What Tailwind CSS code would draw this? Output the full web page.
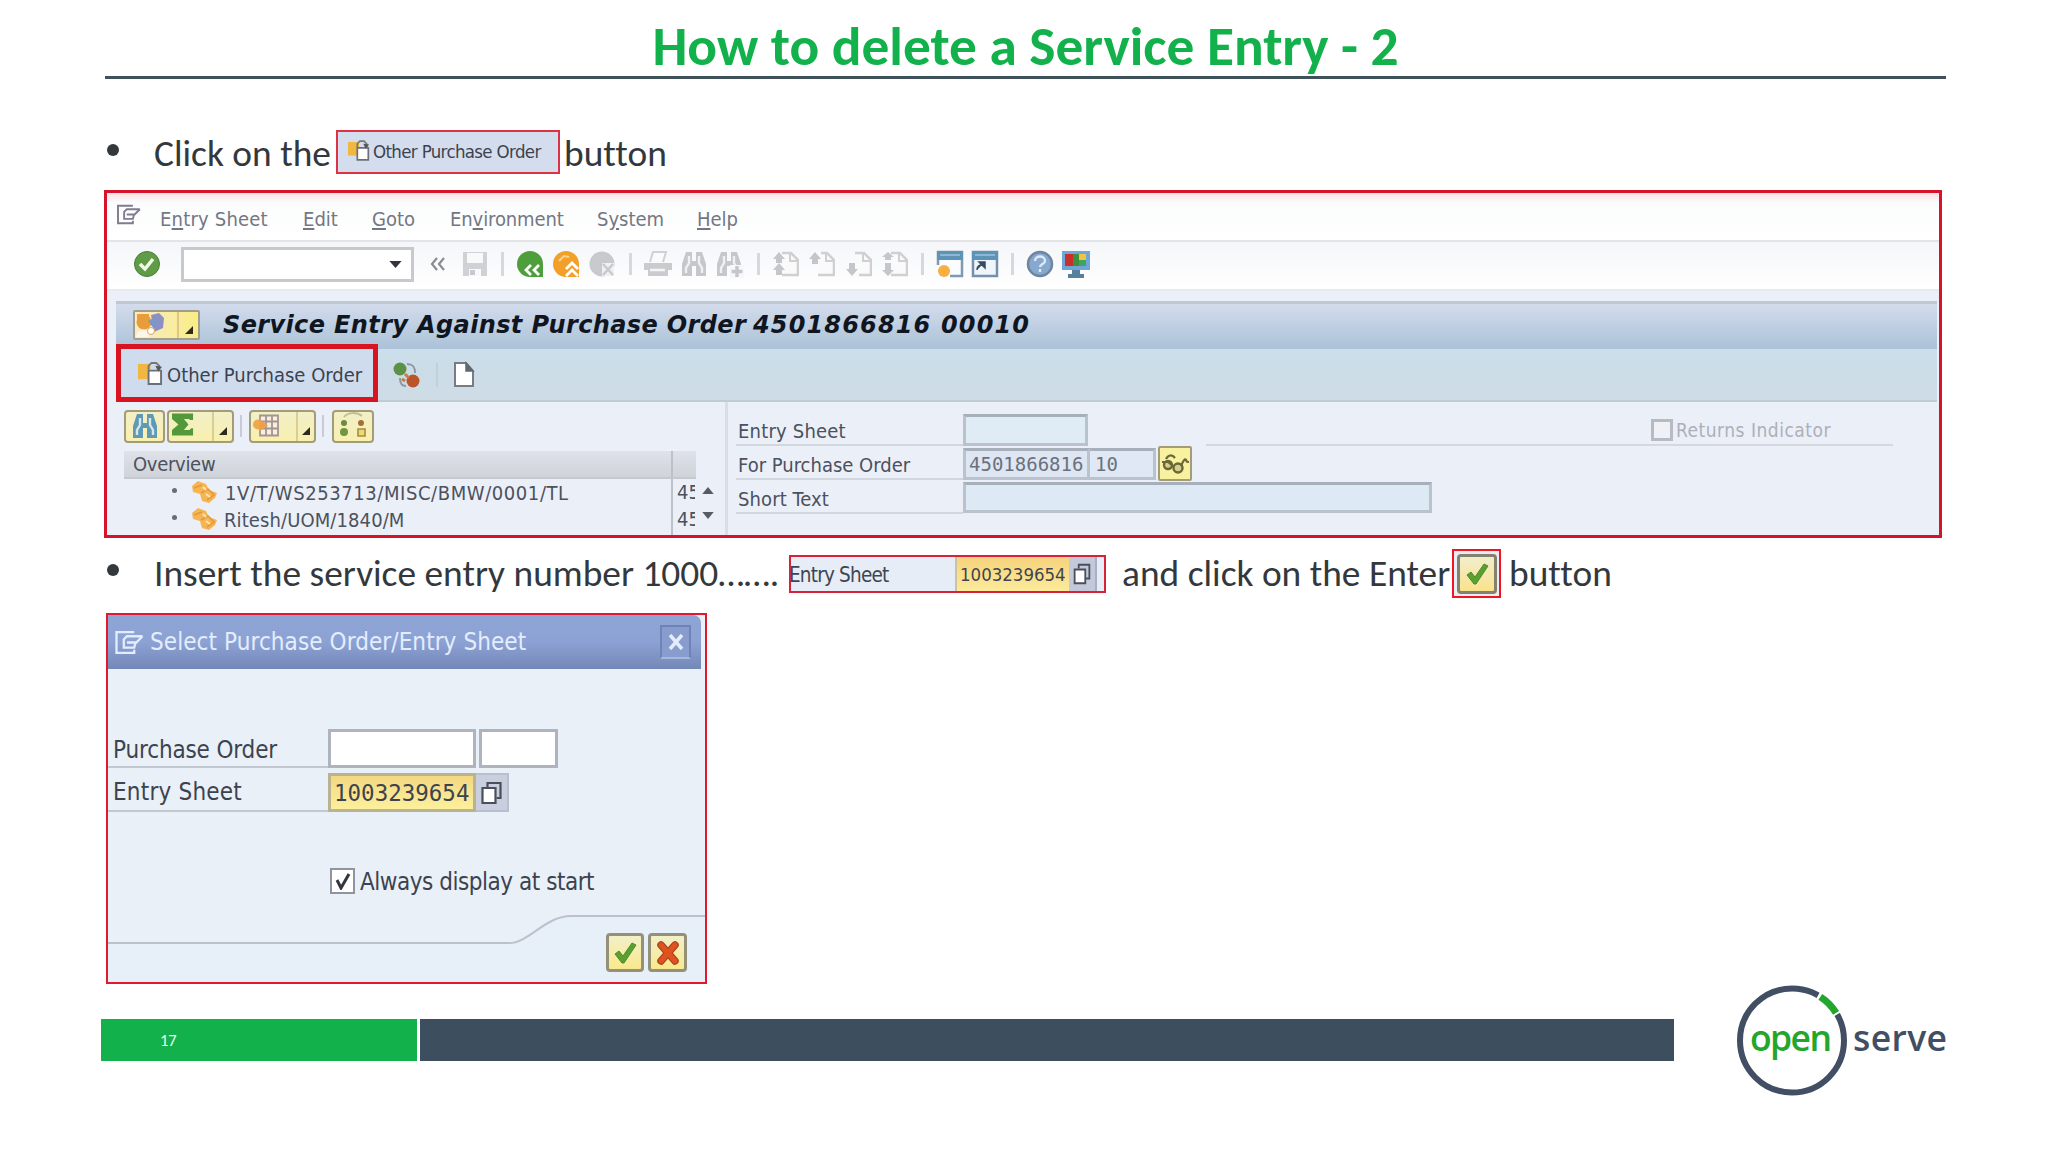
<!DOCTYPE html>
<html lang="en">
<head>
  <meta charset="utf-8">
  <meta name="viewport" content="width=device-width, initial-scale=1.0">
  <title>How to delete a Service Entry - 2</title>
  <script src="https://cdn.jsdelivr.net/npm/@tailwindcss/browser@4"></script>
</head>
<body class="bg-white w-[2048px] h-[1152px] overflow-hidden font-[Carlito,Lato,sans-serif] text-[#33383d] [font-variant-ligatures:none]">

  <!-- shared icons -->
  <svg class="hidden">
    <symbol id="copy" viewBox="0 0 26 24">
      <path d="M0 2h13v16H0z" fill="#f0b840"/>
      <path d="M11 8V4l3-3h5l3 3v4" fill="none" stroke="#77777a" stroke-width="2"/>
      <path d="M11 9h13v14H11z" fill="#fff" stroke="#6b7078" stroke-width="2"/>
      <path d="M18 4l7 1-4 5z" fill="#555"/>
    </symbol>
    <symbol id="exit" viewBox="0 0 28 24">
      <path d="M19 2H2v20h17v-3" fill="none" stroke="currentColor" stroke-width="2.2"/>
      <path d="M27 6H12L9 9v8h10l1-4M12 12h9l6-6" fill="none" stroke="currentColor" stroke-width="2.2"/>
    </symbol>
    <symbol id="tick" viewBox="0 0 24 24">
      <path d="M2 13l4-3 4 5L19 2l4 2-12 18H9z" fill="#5aa02c" stroke="#4c8a34" stroke-width="1"/>
    </symbol>
    <symbol id="squares" viewBox="0 0 22 24">
      <path d="M7 6V2h13v15h-4" fill="none" stroke="#4a4f58" stroke-width="2.2"/>
      <path d="M2 7h13v15H2z" fill="#fff" stroke="#4a4f58" stroke-width="2.2"/>
    </symbol>
    <symbol id="binoc" viewBox="0 0 26 28">
      <path d="M5 2h6v24H1V14zM21 2h-6v24h10V14zM11 11h4v5h-4z" fill="currentColor"/>
      <path d="M8 6v7l-3 5v5M18 6v7l3 5v5" fill="none" stroke="#fff" stroke-opacity=".75" stroke-width="2.400"/>
    </symbol>
    <symbol id="page" viewBox="0 0 26 28">
      <path d="M9 3h9l7 7v15H9" fill="#fafafa" stroke="#d0d0d3" stroke-width="2.5"/>
      <path d="M17 3v8h8" fill="none" stroke="#d0d0d3" stroke-width="2"/>
    </symbol>
    <symbol id="hand" viewBox="0 0 27 24">
      <path d="M1 6l6-5 8 3 3 6 8 3-2 5-6 5-7-2-2-7-7-2z" fill="#f6b553"/>
      <path d="M3 8l8-3M10 13l7-4 6 6-7 5" fill="none" stroke="#e59a3a" stroke-width="1.6"/>
      <path d="M12 7l3 3M15 14l4 3" stroke="#fde3b4" stroke-width="2"/>
    </symbol>
  </svg>

  <header class="ml-[105px] w-[1841px] h-[79px] pt-[13px] border-b-3 border-[#3f5159] text-center text-[55.4px] leading-[66px] font-bold text-[#12b14c] whitespace-nowrap">How to delete a Service Entry - 2</header>

  <main class="ml-[104px]">
    <!-- first bullet -->
    <div class="mt-[50px] h-[45px] flex items-start text-[37.4px] leading-[48px] whitespace-nowrap">
      <span class="w-[12px] h-[12px] mt-[15px] ml-[3px] rounded-full bg-[#33383d]"></span>
      <span class="ml-[35px] w-[182px]">Click on the</span>
      <span class="w-[224px] h-[44px] mt-px border-2 border-[#dc3244] bg-[#d4dded] flex items-center pl-[10px] text-[#3c434f]">
        <svg class="w-[22px] h-[25px] -mt-1"><use href="#copy"/></svg>
        <span class="ml-[3px] text-[18.5px] leading-[40px] tracking-[-0.65px] font-['DejaVu_Sans_Condensed','DejaVu_Sans',sans-serif]">Other Purchase Order</span>
      </span>
      <span class="ml-[4px]">button</span>
    </div>

    <!-- service entry window -->
    <section class="mt-[16px] w-[1838px] h-[348px] border-3 border-[#d5142b] bg-[#ebeff8] font-['DejaVu_Sans_Condensed','DejaVu_Sans',sans-serif] text-[20px] text-[#4b515d] whitespace-nowrap overflow-hidden">
      <div class="h-[49px] bg-linear-to-b from-[#f8dfe3] via-[#fbfcfd] via-20% to-white border-b-2 border-[#e2e4e6] flex items-start pl-[9px] text-[#737783]">
        <svg class="w-[25px] h-[21px] mt-[11px] text-[#817b91]"><use href="#exit"/></svg>
        <div class="flex leading-[53px] ml-[19px]">
          <span class="w-[143px] tracking-[0.2px]">E<u class="underline-offset-2">n</u>try Sheet</span>
          <span class="w-[69px]"><u class="underline-offset-2">E</u>dit</span>
          <span class="w-[78px]"><u class="underline-offset-2">G</u>oto</span>
          <span class="w-[147px] tracking-[-0.1px]">En<u class="underline-offset-2">v</u>ironment</span>
          <span class="w-[100px]">S<u class="underline-offset-2">y</u>stem</span>
          <span><u class="underline-offset-2">H</u>elp</span>
        </div>
      </div>

      <div class="h-[49px] pb-[3px] bg-linear-to-b from-[#f4f6f9] to-white border-b-2 border-[#e7ebec] flex items-center">
        <svg class="w-[28px] h-[28px] ml-[26px]" viewBox="0 0 28 28"><circle cx="14" cy="14" r="12.5" fill="#5f9c45" stroke="#4a7d38"/><path d="M7 14l5 5 8-10" fill="none" stroke="#f1fae9" stroke-width="3.5"/></svg>
        <div class="w-[233px] h-[35px] ml-[20px] bg-white border-3 border-[#c8c9cd] flex items-center justify-end pr-[9px]">
          <svg class="w-[13px] h-[7px]" viewBox="0 0 14 8"><path d="M0 0h14L7 8z" fill="#33353c"/></svg>
        </div>
        <svg class="w-[16px] h-[14px] ml-[16px] mr-[11px]" viewBox="0 0 16 14"><path d="M7 1L2 7l5 6M14 1L9 7l5 6" fill="none" stroke="#898c92" stroke-width="2.2"/></svg>
        <div class="flex items-center">
          <div class="w-[36px] flex justify-center"><svg class="w-[28px] h-[28px]" viewBox="0 0 28 28"><path d="M2 2h24v24H2z" fill="#d0d1d4"/><path d="M6 3h16v10H6zM8 19h12v7H8z" fill="#f9f9fa"/><path d="M9 20h5v5H9z" fill="#c8c9cc"/></svg></div>
          <div class="w-[19px] flex justify-center"><i class="w-[3px] h-[24px] bg-[#d7d8db]"></i></div>
          <div class="w-[36px] flex justify-center"><svg class="w-[28px] h-[28px]" viewBox="0 0 28 28"><circle cx="14" cy="14" r="13" fill="#4f9e3c"/><path d="M10 15h17v12H14z" fill="#4f9e3c"/><path d="M15 15l-5 5 5 5M23 15l-5 5 5 5" fill="none" stroke="#fff" stroke-width="2.8"/></svg></div>
          <div class="w-[36px] flex justify-center"><svg class="w-[28px] h-[28px]" viewBox="0 0 28 28"><circle cx="14" cy="14" r="13" fill="#f3a02b"/><path d="M14 14h13v13H14z" fill="#f3a02b"/><path d="M14 19l6-6 6 6M14 26l6-6 6 6" fill="none" stroke="#fff" stroke-width="2.8"/><path d="M7 11l5-5 5 1" fill="none" stroke="#fbd48c" stroke-width="2"/></svg></div>
          <div class="w-[36px] flex justify-center"><svg class="w-[28px] h-[28px]" viewBox="0 0 28 28"><circle cx="14" cy="14" r="12.500" fill="#c8c9cc"/><path d="M14 13h12v13H14z" fill="#f0f0f2"/><path d="M15 14l10 11M25 14L15 25" fill="none" stroke="#c8c9cc" stroke-width="2.5"/></svg></div>
          <div class="w-[20px] flex justify-center"><i class="w-[3px] h-[22px] bg-[#d7d8db]"></i></div>
          <div class="w-[36px] flex justify-center"><svg class="w-[28px] h-[28px]" viewBox="0 0 28 28"><path d="M6 12L9 2h13l-3 10" fill="#fafafa" stroke="#d0d1d5" stroke-width="2"/><path d="M0 13h28v7h-4v6H4v-6H0z" fill="#cacbce"/><path d="M6 20h15" stroke="#f5f5f6" stroke-width="2.5"/></svg></div>
          <div class="w-[36px] flex justify-center text-[#c6c7ca]"><svg class="w-[26px] h-[28px]"><use href="#binoc"/></svg></div>
          <div class="w-[36px] flex justify-center text-[#c6c7ca]"><svg class="w-[28px] h-[28px]" viewBox="0 0 28 28"><use href="#binoc" width="26" height="28"/><path d="M14 15h14v13H14z" fill="#f7f8f9"/><path d="M21 16v11M15.500 21.500h11" stroke="#c5c6ca" stroke-width="3.500"/></svg></div>
          <div class="w-[20px] flex justify-center"><i class="w-[3px] h-[22px] bg-[#d7d8db]"></i></div>
          <div class="w-[36px] flex justify-center"><svg class="w-[26px] h-[28px]" viewBox="0 0 26 28"><use href="#page"/><path d="M0 9l6-7 6 7H9v4H3V9zM0 20l6-7 6 7H9v5H3v-5z" fill="#c5c6ca"/></svg></div>
          <div class="w-[36px] flex justify-center"><svg class="w-[26px] h-[28px]" viewBox="0 0 26 28"><use href="#page"/><path d="M3 0h9v14H3z" fill="#f8f9fa"/><path d="M0 9l6-7 6 7H9v5H3V9z" fill="#c5c6ca"/></svg></div>
          <div class="w-[37px] flex justify-center"><svg class="w-[26px] h-[28px]" viewBox="0 0 26 28"><use href="#page"/><path d="M3 14h10v14H3z" fill="#fafbfb"/><path d="M0 19l6 7 6-7H9v-6H3v6z" fill="#c5c6ca"/></svg></div>
          <div class="w-[36px] flex justify-center"><svg class="w-[26px] h-[28px]" viewBox="0 0 26 28"><use href="#page"/><path d="M0 7l6-5 6 5H9v3H3V7zM0 20l6 6 6-6H9v-7H3v7z" fill="#c5c6ca"/></svg></div>
          <div class="w-[19px] flex justify-center"><i class="w-[3px] h-[22px] bg-[#d7d8db]"></i></div>
          <div class="w-[35px] flex justify-center"><svg class="w-[28px] h-[28px]" viewBox="0 0 28 28"><path d="M2 2h24v24H2z" fill="#fafcff" stroke="#8199b0" stroke-width="2.5"/><path d="M1 1h26v9H1z" fill="#5e93b8"/><path d="M4 5h20" stroke="#8db7d2" stroke-width="2"/><path d="M0 15h14v13H0z" fill="#fbfcfe"/><circle cx="8" cy="21" r="6" fill="#f5b041"/></svg></div>
          <div class="w-[36px] flex justify-center"><svg class="w-[28px] h-[28px]" viewBox="0 0 28 28"><path d="M2 2h24v24H2z" fill="#eef5fb" stroke="#7690ab" stroke-width="2.5"/><path d="M1 1h26v9H1z" fill="#5e93b8"/><path d="M4 5h20" stroke="#8db7d2" stroke-width="2"/><path d="M6 20c0-4 2-5 5-5M8 12h6v6z" fill="#384b61" stroke="#384b61" stroke-width="1.500"/></svg></div>
          <div class="w-[19px] flex justify-center"><i class="w-[3px] h-[22px] bg-[#d7d8db]"></i></div>
          <div class="w-[36px] flex justify-center"><svg class="w-[28px] h-[28px]" viewBox="0 0 28 28"><circle cx="14" cy="14" r="12" fill="#86a9d0" stroke="#71849e" stroke-width="2.5"/><path d="M9 11c0-6 10-6 10 0 0 3-5 3-5 6M14 19v3" fill="none" stroke="#dfeaf7" stroke-width="2.400"/></svg></div>
          <div class="w-[36px] flex justify-center"><svg class="w-[28px] h-[28px]" viewBox="0 0 28 28"><path d="M0 1h28v19H0z" fill="#6fa6d6"/><path d="M3 4h8v12H3z" fill="#c9302c"/><path d="M11 4h6v12h-6z" fill="#3f8f3f"/><path d="M17 4h7v6h-7z" fill="#f0c43c"/><path d="M17 10h7v6h-7z" fill="#3da463"/><path d="M10 20h8v4h4v4H6v-4h4z" fill="#57809f"/></svg></div>
        </div>
      </div>

      <div class="ml-[9px] mt-[10px] h-[48px] w-[1821px] border-t-3 border-[#c0c6d4] bg-linear-to-b from-[#d3dcec] to-[#abc2d8] flex items-center">
        <div class="ml-[17px] -mt-[3px] w-[67px] h-[30px] rounded-xs border-2 border-[#a39d8c] bg-linear-to-r from-[#fbe9c5] to-[#f7ee84] flex">
          <svg class="w-[32px] h-[26px]" viewBox="0 0 32 26"><path d="M2 2h12v9H2z" fill="#eaa036"/><circle cx="9" cy="10" r="7.500" fill="#e99c3a"/><path d="M16 3l8-2 5 5-1 10-9 4z" fill="#8d8fc5"/><path d="M13 9l6-3 6 5-6 6z" fill="#7f97c6"/><path d="M1 25c1-8 8-9 13-5v5z" fill="#fff6ea"/><circle cx="16" cy="19" r="3.500" fill="#fff" stroke="#e0a55c"/></svg>
          <div class="ml-[10px] w-[20px] border-l-2 border-[#e0c585] flex items-end justify-end pr-1 pb-1"><svg class="w-[8px] h-[8px]" viewBox="0 0 8 8"><path d="M8 0v8H0z" fill="#2d2b20"/></svg></div>
        </div>
        <h2 class="ml-[23px] -mt-[3px] text-[24px] tracking-[0.37px] font-bold italic text-[#10161f] font-['DejaVu_Sans',sans-serif]">Service Entry Against Purchase Order <span class="tracking-[1.15px] -ml-[2px]">4501866816 00010</span></h2>
      </div>

      <div class="ml-[9px] h-[53px] w-[1821px] bg-linear-to-b from-[#cbdfec] via-[#ccdce6] to-[#cfdce6] border-b-2 border-[#c0ccd4] flex items-start">
        <div class="relative -mt-[5px] w-[262px] h-[58px] border-[5px] border-[#d81420] bg-[#cfdcee] flex items-center pl-[17px] text-[#3c4350]">
          <svg class="w-[25px] h-[25px]"><use href="#copy"/></svg>
          <span class="ml-[4px] mt-[4px]">Other Purchase Order</span>
        </div>
        <svg class="w-[28px] h-[26px] ml-[15px] mt-[13px]" viewBox="0 0 28 26"><circle cx="7" cy="7" r="6.500" fill="#5b9248"/><circle cx="20" cy="19" r="6.500" fill="#bb5429"/><path d="M14 2c7 0 8 4 8 9M13 24c-5 0-6-3-6-8" fill="none" stroke="#8b98a0" stroke-width="2"/><path d="M12 12l4 4M9 17l3 2" stroke="#c77b45" stroke-width="3"/></svg>
        <i class="w-[2px] h-[24px] bg-[#c2d0d9] ml-[15px] mt-[14px]"></i>
        <svg class="w-[22px] h-[27px] ml-[15px] mt-[12px]" viewBox="0 0 22 27"><path d="M2 2h11l7 8v15H2z" fill="#fff" stroke="#757c85" stroke-width="2"/><path d="M13 2v8h7z" fill="#62686f" stroke="#62686f" stroke-width="1.500"/></svg>
      </div>

      <div class="flex h-[135px]">
        <!-- tree -->
        <div class="ml-[9px] w-[612px] border-r-3 border-[#d9dde6]">
          <div class="ml-[8px] pt-[8px] h-[49px] flex items-start">
            <div class="w-[41px] h-[33px] border-2 border-[#a39c79] rounded-sm bg-linear-to-b from-[#f3efc8] to-[#f8f0ad] flex justify-center text-[#5f9ab5]"><svg class="w-[28px] h-[28px]" viewBox="0 0 26 28"><use href="#binoc"/></svg></div>
            <div class="ml-[2px] w-[67px] h-[33px] border-2 border-[#a39c79] rounded-sm bg-linear-to-b from-[#f3efc8] to-[#f8f0ad] flex">
              <svg class="ml-[3px] w-[22px] h-[25px]" viewBox="0 0 24 26"><path d="M0 1h23v7h-3l-2-1h-5l5 6-5 6h6l2-2h2v8H0v-6l7-6-7-6z" fill="#53993a"/></svg>
              <div class="ml-[18px] w-[20px] border-l-2 border-[#d8cd93] flex items-end justify-end pr-[5px] pb-[6px]"><svg class="w-[8px] h-[8px]" viewBox="0 0 8 8"><path d="M8 0v8H0z" fill="#2d2b20"/></svg></div>
            </div>
            <i class="w-[2px] h-[22px] mt-[5px] ml-[6px] bg-[#c8c9da]"></i>
            <div class="ml-[7px] w-[67px] h-[33px] border-2 border-[#a39c79] rounded-sm bg-linear-to-b from-[#f3efc8] to-[#f8f0ad] flex">
              <svg class="ml-[1px] w-[27px] h-[27px]" viewBox="0 0 27 26"><path d="M8 3h18v20H8zM8 9h18M8 16h18M14 3v20M20 3v20" fill="#f6f0df" stroke="#a59391" stroke-width="1.800"/><circle cx="6" cy="12" r="5" fill="#f0a750"/><path d="M7 6l9 7-9 6z" fill="#eda04a"/></svg>
              <div class="ml-[17px] w-[18px] border-l-2 border-[#d8cd93] flex items-end justify-end pr-[4px] pb-[6px]"><svg class="w-[8px] h-[8px]" viewBox="0 0 8 8"><path d="M8 0v8H0z" fill="#2d2b20"/></svg></div>
            </div>
            <i class="w-[2px] h-[22px] mt-[5px] ml-[6px] bg-[#c8c9da]"></i>
            <div class="ml-[8px] w-[42px] h-[33px] border-2 border-[#a39c79] rounded-sm bg-linear-to-b from-[#f3efc8] to-[#f8f0ad] flex justify-center">
              <svg class="w-[34px] h-[28px]" viewBox="0 0 34 28"><path d="M8 5c4-5 13-5 18-1" fill="none" stroke="#c0bf92" stroke-width="2"/><circle cx="8" cy="11" r="3" fill="#6c8b3f"/><circle cx="8" cy="20" r="4" fill="#6f9640"/><circle cx="25" cy="11" r="3" fill="#a4703a"/><path d="M22 17h7v7h-7z" fill="#eadb77" stroke="#a68c3f" stroke-width="1.600"/></svg>
            </div>
          </div>
          <div class="ml-[8px] w-[572px] h-[28px] border-b-2 border-[#c5c8ce] bg-linear-to-b from-[#dfe2e8] to-[#cfd3da] flex">
            <span class="w-[549px] border-r-2 border-[#bcc0c8] pl-[9px] leading-[26px] tracking-[-0.3px]">Overview</span>
          </div>
          <div class="flex">
            <div class="ml-[8px] w-[549px] border-r-2 border-[#bcc0c8] h-[60px]">
              <div class="h-[27px] flex items-center pl-[48px]"><i class="w-[5px] h-[5px] -mt-1 rounded-full bg-[#676c76]"></i><svg class="ml-[14px] -mt-[2px] w-[27px] h-[24px]"><use href="#hand"/></svg><span class="ml-[7px] tracking-[0.58px]">1V/T/WS253713/MISC/BMW/0001/TL</span></div>
              <div class="h-[27px] flex items-center pl-[48px]"><i class="w-[5px] h-[5px] -mt-1 rounded-full bg-[#676c76]"></i><svg class="ml-[14px] -mt-[2px] w-[27px] h-[24px]"><use href="#hand"/></svg><span class="ml-[6px] tracking-[0.1px]">Ritesh/UOM/1840/M</span></div>
            </div>
            <div class="ml-[4px] w-[18px] overflow-hidden leading-[27px]"><div>45</div><div>45</div></div>
            <div class="ml-[7px] pt-[8px] flex flex-col gap-[18px]">
              <svg class="w-[12px] h-[7px]" viewBox="0 0 13 8"><path d="M0 8h13L6.500 0z" fill="#565b65"/></svg>
              <svg class="w-[12px] h-[7px]" viewBox="0 0 13 8"><path d="M0 0h13L6.500 8z" fill="#565b65"/></svg>
            </div>
          </div>
        </div>

        <!-- detail fields -->
        <div class="ml-[8px] pt-[12px] w-[1160px]">
          <div class="h-[34px] flex">
            <div class="w-[227px] h-[32px] border-b-2 border-[#d2d6de] pl-[2px] leading-[34px] tracking-[0.2px]">Entry Sheet</div>
            <div class="w-[125px] h-[32px] border-3 border-[#bac2ce] border-t-[#a7afba] bg-[#dfebf5]"></div>
            <div class="ml-[118px] w-[687px] h-[32px] border-b-2 border-[#d5d8de] flex items-center pl-[445px] text-[#adb0b8]">
              <i class="w-[22px] h-[22px] mt-[2px] border-3 border-[#b7bac0] bg-[#eff1f6]"></i>
              <span class="ml-[3px] mt-[2px] text-[19px] tracking-[0.5px]">Returns Indicator</span>
            </div>
          </div>
          <div class="h-[34px] flex">
            <div class="w-[227px] h-[32px] border-b-2 border-[#d2d6de] pl-[2px] leading-[34px]">For Purchase Order</div>
            <div class="w-[127px] h-[32px] border-3 border-[#bac2ce] border-t-[#a7afba] bg-[#dfe6f3] pl-[3px] leading-[27px] text-[19px] text-[#6b717c] font-['DejaVu_Sans_Mono',monospace]">4501866816</div>
            <div class="w-[66px] h-[32px] border-3 border-l-0 border-[#bac2ce] border-t-[#a7afba] bg-[#dfe8f4] pl-[5px] leading-[27px] text-[19px] text-[#6b717c] font-['DejaVu_Sans_Mono',monospace]">10</div>
            <div class="ml-[2px] -mt-[2px] w-[34px] h-[35px] border-2 border-[#a39c79] rounded-xs bg-[#f8f1a0] flex items-center justify-center">
              <svg class="w-[29px] h-[22px]" viewBox="0 0 29 22"><circle cx="7" cy="12" r="4" fill="#d5cf8a" stroke="#6a6739" stroke-width="2.400"/><circle cx="17" cy="15" r="4.500" fill="#d5cf8a" stroke="#6a6739" stroke-width="2.400"/><path d="M1 9h6l5 4M5 6c2-4 6-5 9-1M20 13c2-5 4-8 5-6s0 2 3 2" fill="none" stroke="#6a6739" stroke-width="2.200"/></svg>
            </div>
          </div>
          <div class="h-[34px] flex">
            <div class="w-[227px] h-[32px] border-b-2 border-[#d2d6de] pl-[2px] leading-[34px] tracking-[0.1px]">Short Text</div>
            <div class="w-[469px] h-[31px] border-3 border-[#bac2ce] border-t-[#a7afba] bg-[#dee9f6]"></div>
          </div>
        </div>
      </div>
    </section>

    <!-- second bullet -->
    <div class="mt-[11px] h-[49px] flex items-start text-[37.4px] leading-[48px] whitespace-nowrap">
      <span class="w-[12px] h-[12px] mt-[15px] ml-[3px] rounded-full bg-[#33383d]"></span>
      <span class="ml-[35px] w-[635px]">Insert the service entry number 1000…….</span>
      <span class="mt-[6px] w-[317px] h-[38px] border-2 border-[#d5243a] bg-[#e6edf7] flex font-['DejaVu_Sans_Condensed','DejaVu_Sans',sans-serif] text-[20.500px] leading-[36px] text-[#3f4550]">
        <span class="w-[166px] tracking-[-0.8px] -ml-[2px]">Entry Sheet</span>
        <span class="w-[114px] bg-linear-to-b from-[#f7d27c] to-[#fbeb9b] border-l-2 border-[#c9c3a5] pl-[3px] text-[18.500px] tracking-[-0.02px]">1003239654</span>
        <span class="w-[28px] bg-[#c3c9db] border-r-2 border-[#aab0c2] flex items-center justify-center"><svg class="w-[18px] h-[22px]" viewBox="0 0 22 24" preserveAspectRatio="none"><use href="#squares"/></svg></span>
      </span>
      <span class="ml-[16px] w-[330px]">and click on the Enter</span>
      <span class="w-[49px] h-[49px] border-2 border-[#ee1620] bg-[#e9eef6] flex items-center justify-center">
        <span class="w-[40px] h-[40px] rounded-sm border-3 border-[#85816f] bg-linear-to-b from-[#f1eecb] to-[#fbe28b] flex items-center justify-center"><svg class="w-[26px] h-[24px]"><use href="#tick"/></svg></span>
      </span>
      <span class="ml-[8px]">button</span>
    </div>

    <!-- select dialog -->
    <section class="ml-[2px] mt-[15px] w-[601px] h-[371px] border-2 border-[#e01a2c] bg-[#e9f0f8] font-['DejaVu_Sans_Condensed','DejaVu_Sans',sans-serif] text-[24px] text-[#3d434e] whitespace-nowrap">
      <div class="mr-[4px] h-[54px] rounded-tr-lg bg-linear-to-b from-[#8fa5d6] via-[#8da2d4] to-[#7388b6] flex items-center text-[#e3edfd]">
        <svg class="ml-[6px] w-[30px] h-[25px]"><use href="#exit"/></svg>
        <span class="ml-[6px] tracking-[0.08px]">Select Purchase Order/Entry Sheet</span>
        <span class="ml-[134px] w-[31px] h-[34px] border-2 border-[#7083b6] border-b-[#a5b8e0] bg-[#889dcd] flex items-center justify-center"><svg class="w-[16px] h-[16px]" viewBox="0 0 16 16"><path d="M2 1l12 14M14 1L2 15" stroke="#e3edfd" stroke-width="3.500"/></svg></span>
      </div>
      <div class="pt-[60px] h-[104px] flex">
        <div class="w-[220px] h-[39px] border-b-2 border-[#c2c7d0] pl-[5px] leading-[42px] tracking-[-0.15px]">Purchase Order</div>
        <div class="w-[148px] h-[39px] border-3 border-[#aeb3bd] bg-white"></div>
        <div class="ml-[3px] w-[79px] h-[39px] border-3 border-[#aeb3bd] bg-white"></div>
      </div>
      <div class="h-[39px] flex">
        <div class="w-[220px] border-b-2 border-[#c2c7d0] pl-[5px] leading-[39px] tracking-[0.2px]">Entry Sheet</div>
        <div class="w-[148px] border-3 border-[#b9b48f] bg-linear-to-b from-[#f3d883] to-[#fdf09b] pl-[3px] leading-[34px] text-[22.500px] font-['DejaVu_Sans_Mono',monospace]">1003239654</div>
        <div class="w-[33px] border-2 border-l-0 border-[#b9bfcd] bg-[#c9cfdf] flex items-center justify-center"><svg class="w-[23px] h-[24px]" viewBox="0 0 22 24"><use href="#squares"/></svg></div>
      </div>
      <div class="pt-[56px] h-[98px] flex items-start">
        <i class="ml-[222px] w-[25px] h-[26px] border-2 border-[#8f949e] bg-white flex items-center justify-center"><svg class="w-[16px] h-[18px]" viewBox="0 0 16 18"><path d="M2 8l4 8 8-14" fill="none" stroke="#33363f" stroke-width="3"/></svg></i>
        <span class="ml-[5px] leading-[28px] tracking-[-0.47px]">Always display at start</span>
      </div>
      <div class="h-[72px] relative">
        <svg class="absolute left-0 top-0 w-[597px] h-[72px]" viewBox="0 0 597 72"><path d="M0 33h401c20 0 36-27 62-27h134v66H0z" fill="#e7eff9"/><path d="M0 33h401c20 0 36-27 62-27h134" fill="none" stroke="#bcc2cd" stroke-width="2"/></svg>
        <div class="relative flex pl-[498px] pt-[23px]">
          <span class="w-[38px] h-[39px] rounded-sm border-3 border-[#94907a] bg-linear-to-b from-[#f3efc8] to-[#fae98a] flex items-center justify-center"><svg class="w-[26px] h-[24px]"><use href="#tick"/></svg></span>
          <span class="ml-[4px] w-[39px] h-[39px] rounded-sm border-3 border-[#94907a] bg-linear-to-b from-[#f3efc8] to-[#fae98a] flex items-center justify-center"><svg class="w-[24px] h-[24px]" viewBox="0 0 24 24"><path d="M5 4l14 16M19 4L5 20" stroke="#a8431f" stroke-width="7.500" stroke-linecap="round"/><path d="M5 4l14 16M19 4L5 20" stroke="#e0531f" stroke-width="5" stroke-linecap="round"/></svg></span>
        </div>
      </div>
    </section>
  </main>

  <footer class="ml-[101px] flex items-start">
    <div class="mt-[35px] w-[316px] h-[42px] bg-[#12b14c] text-[#e6ffee] text-[16.500px] leading-[43px] pl-[59px]">17</div>
    <div class="mt-[35px] ml-[3px] w-[1254px] h-[42px] bg-[#3d4f5f]"></div>
    <svg class="ml-[60px] mt-px w-[220px] h-[112px]" viewBox="0 0 220 112">
      <circle cx="58" cy="55.500" r="52" fill="none" stroke="#414e63" stroke-width="6"/>
      <path d="M84 10.460A52 52 0 0 1 103.030 29.500" fill="none" stroke="#fff" stroke-width="8"/>
      <path d="M86.320 11.890A52 52 0 0 1 102.100 27.940" fill="none" stroke="#23a62c" stroke-width="7"/>
      <text x="16" y="66" textLength="82" font-family="Open Sans" font-weight="600" font-size="35.500" fill="#23a62c">open</text>
      <text x="119" y="66" textLength="94" font-family="Open Sans" font-weight="600" font-size="35.500" fill="#414e63">serve</text>
    </svg>
  </footer>
</body>
</html>
